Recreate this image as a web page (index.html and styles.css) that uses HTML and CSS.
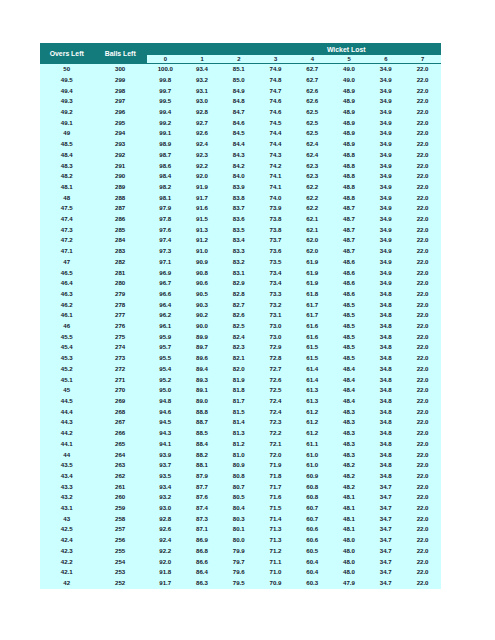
FILE: index.html
```html
<!DOCTYPE html>
<html>
<head>
<meta charset="utf-8">
<link rel="stylesheet" href="styles.css">
</head>
<body>
<div class="page">
<table class="sheet">
<thead>
<tr class="h1">
<th class="lead" rowspan="2">Overs Left</th>
<th class="lead" rowspan="2">Balls Left</th>
<th class="wk" colspan="8"><span>Wicket Lost</span></th>
</tr>
<tr class="h2">
<th>0</th><th>1</th><th>2</th><th>3</th><th>4</th><th>5</th><th>6</th><th>7</th>
</tr>
</thead>
<tbody>
<tr><td>50</td><td>300</td><td>100.0</td><td>93.4</td><td>85.1</td><td>74.9</td><td>62.7</td><td>49.0</td><td>34.9</td><td>22.0</td></tr>
<tr><td>49.5</td><td>299</td><td>99.8</td><td>93.2</td><td>85.0</td><td>74.8</td><td>62.7</td><td>49.0</td><td>34.9</td><td>22.0</td></tr>
<tr><td>49.4</td><td>298</td><td>99.7</td><td>93.1</td><td>84.9</td><td>74.7</td><td>62.6</td><td>48.9</td><td>34.9</td><td>22.0</td></tr>
<tr><td>49.3</td><td>297</td><td>99.5</td><td>93.0</td><td>84.8</td><td>74.6</td><td>62.6</td><td>48.9</td><td>34.9</td><td>22.0</td></tr>
<tr><td>49.2</td><td>296</td><td>99.4</td><td>92.8</td><td>84.7</td><td>74.6</td><td>62.5</td><td>48.9</td><td>34.9</td><td>22.0</td></tr>
<tr><td>49.1</td><td>295</td><td>99.2</td><td>92.7</td><td>84.6</td><td>74.5</td><td>62.5</td><td>48.9</td><td>34.9</td><td>22.0</td></tr>
<tr><td>49</td><td>294</td><td>99.1</td><td>92.6</td><td>84.5</td><td>74.4</td><td>62.5</td><td>48.9</td><td>34.9</td><td>22.0</td></tr>
<tr><td>48.5</td><td>293</td><td>98.9</td><td>92.4</td><td>84.4</td><td>74.4</td><td>62.4</td><td>48.9</td><td>34.9</td><td>22.0</td></tr>
<tr><td>48.4</td><td>292</td><td>98.7</td><td>92.3</td><td>84.3</td><td>74.3</td><td>62.4</td><td>48.8</td><td>34.9</td><td>22.0</td></tr>
<tr><td>48.3</td><td>291</td><td>98.6</td><td>92.2</td><td>84.2</td><td>74.2</td><td>62.3</td><td>48.8</td><td>34.9</td><td>22.0</td></tr>
<tr><td>48.2</td><td>290</td><td>98.4</td><td>92.0</td><td>84.0</td><td>74.1</td><td>62.3</td><td>48.8</td><td>34.9</td><td>22.0</td></tr>
<tr><td>48.1</td><td>289</td><td>98.2</td><td>91.9</td><td>83.9</td><td>74.1</td><td>62.2</td><td>48.8</td><td>34.9</td><td>22.0</td></tr>
<tr><td>48</td><td>288</td><td>98.1</td><td>91.7</td><td>83.8</td><td>74.0</td><td>62.2</td><td>48.8</td><td>34.9</td><td>22.0</td></tr>
<tr><td>47.5</td><td>287</td><td>97.9</td><td>91.6</td><td>83.7</td><td>73.9</td><td>62.2</td><td>48.7</td><td>34.9</td><td>22.0</td></tr>
<tr><td>47.4</td><td>286</td><td>97.8</td><td>91.5</td><td>83.6</td><td>73.8</td><td>62.1</td><td>48.7</td><td>34.9</td><td>22.0</td></tr>
<tr><td>47.3</td><td>285</td><td>97.6</td><td>91.3</td><td>83.5</td><td>73.8</td><td>62.1</td><td>48.7</td><td>34.9</td><td>22.0</td></tr>
<tr><td>47.2</td><td>284</td><td>97.4</td><td>91.2</td><td>83.4</td><td>73.7</td><td>62.0</td><td>48.7</td><td>34.9</td><td>22.0</td></tr>
<tr><td>47.1</td><td>283</td><td>97.3</td><td>91.0</td><td>83.3</td><td>73.6</td><td>62.0</td><td>48.7</td><td>34.9</td><td>22.0</td></tr>
<tr><td>47</td><td>282</td><td>97.1</td><td>90.9</td><td>83.2</td><td>73.5</td><td>61.9</td><td>48.6</td><td>34.9</td><td>22.0</td></tr>
<tr><td>46.5</td><td>281</td><td>96.9</td><td>90.8</td><td>83.1</td><td>73.4</td><td>61.9</td><td>48.6</td><td>34.9</td><td>22.0</td></tr>
<tr><td>46.4</td><td>280</td><td>96.7</td><td>90.6</td><td>82.9</td><td>73.4</td><td>61.9</td><td>48.6</td><td>34.9</td><td>22.0</td></tr>
<tr><td>46.3</td><td>279</td><td>96.6</td><td>90.5</td><td>82.8</td><td>73.3</td><td>61.8</td><td>48.6</td><td>34.8</td><td>22.0</td></tr>
<tr><td>46.2</td><td>278</td><td>96.4</td><td>90.3</td><td>82.7</td><td>73.2</td><td>61.7</td><td>48.5</td><td>34.8</td><td>22.0</td></tr>
<tr><td>46.1</td><td>277</td><td>96.2</td><td>90.2</td><td>82.6</td><td>73.1</td><td>61.7</td><td>48.5</td><td>34.8</td><td>22.0</td></tr>
<tr><td>46</td><td>276</td><td>96.1</td><td>90.0</td><td>82.5</td><td>73.0</td><td>61.6</td><td>48.5</td><td>34.8</td><td>22.0</td></tr>
<tr><td>45.5</td><td>275</td><td>95.9</td><td>89.9</td><td>82.4</td><td>73.0</td><td>61.6</td><td>48.5</td><td>34.8</td><td>22.0</td></tr>
<tr><td>45.4</td><td>274</td><td>95.7</td><td>89.7</td><td>82.3</td><td>72.9</td><td>61.5</td><td>48.5</td><td>34.8</td><td>22.0</td></tr>
<tr><td>45.3</td><td>273</td><td>95.5</td><td>89.6</td><td>82.1</td><td>72.8</td><td>61.5</td><td>48.5</td><td>34.8</td><td>22.0</td></tr>
<tr><td>45.2</td><td>272</td><td>95.4</td><td>89.4</td><td>82.0</td><td>72.7</td><td>61.4</td><td>48.4</td><td>34.8</td><td>22.0</td></tr>
<tr><td>45.1</td><td>271</td><td>95.2</td><td>89.3</td><td>81.9</td><td>72.6</td><td>61.4</td><td>48.4</td><td>34.8</td><td>22.0</td></tr>
<tr><td>45</td><td>270</td><td>95.0</td><td>89.1</td><td>81.8</td><td>72.5</td><td>61.3</td><td>48.4</td><td>34.8</td><td>22.0</td></tr>
<tr><td>44.5</td><td>269</td><td>94.8</td><td>89.0</td><td>81.7</td><td>72.4</td><td>61.3</td><td>48.4</td><td>34.8</td><td>22.0</td></tr>
<tr><td>44.4</td><td>268</td><td>94.6</td><td>88.8</td><td>81.5</td><td>72.4</td><td>61.2</td><td>48.3</td><td>34.8</td><td>22.0</td></tr>
<tr><td>44.3</td><td>267</td><td>94.5</td><td>88.7</td><td>81.4</td><td>72.3</td><td>61.2</td><td>48.3</td><td>34.8</td><td>22.0</td></tr>
<tr><td>44.2</td><td>266</td><td>94.3</td><td>88.5</td><td>81.3</td><td>72.2</td><td>61.2</td><td>48.3</td><td>34.8</td><td>22.0</td></tr>
<tr><td>44.1</td><td>265</td><td>94.1</td><td>88.4</td><td>81.2</td><td>72.1</td><td>61.1</td><td>48.3</td><td>34.8</td><td>22.0</td></tr>
<tr><td>44</td><td>264</td><td>93.9</td><td>88.2</td><td>81.0</td><td>72.0</td><td>61.0</td><td>48.3</td><td>34.8</td><td>22.0</td></tr>
<tr><td>43.5</td><td>263</td><td>93.7</td><td>88.1</td><td>80.9</td><td>71.9</td><td>61.0</td><td>48.2</td><td>34.8</td><td>22.0</td></tr>
<tr><td>43.4</td><td>262</td><td>93.5</td><td>87.9</td><td>80.8</td><td>71.8</td><td>60.9</td><td>48.2</td><td>34.8</td><td>22.0</td></tr>
<tr><td>43.3</td><td>261</td><td>93.4</td><td>87.7</td><td>80.7</td><td>71.7</td><td>60.8</td><td>48.2</td><td>34.7</td><td>22.0</td></tr>
<tr><td>43.2</td><td>260</td><td>93.2</td><td>87.6</td><td>80.5</td><td>71.6</td><td>60.8</td><td>48.1</td><td>34.7</td><td>22.0</td></tr>
<tr><td>43.1</td><td>259</td><td>93.0</td><td>87.4</td><td>80.4</td><td>71.5</td><td>60.7</td><td>48.1</td><td>34.7</td><td>22.0</td></tr>
<tr><td>43</td><td>258</td><td>92.8</td><td>87.3</td><td>80.3</td><td>71.4</td><td>60.7</td><td>48.1</td><td>34.7</td><td>22.0</td></tr>
<tr><td>42.5</td><td>257</td><td>92.6</td><td>87.1</td><td>80.1</td><td>71.3</td><td>60.6</td><td>48.1</td><td>34.7</td><td>22.0</td></tr>
<tr><td>42.4</td><td>256</td><td>92.4</td><td>86.9</td><td>80.0</td><td>71.3</td><td>60.6</td><td>48.0</td><td>34.7</td><td>22.0</td></tr>
<tr><td>42.3</td><td>255</td><td>92.2</td><td>86.8</td><td>79.9</td><td>71.2</td><td>60.5</td><td>48.0</td><td>34.7</td><td>22.0</td></tr>
<tr><td>42.2</td><td>254</td><td>92.0</td><td>86.6</td><td>79.7</td><td>71.1</td><td>60.4</td><td>48.0</td><td>34.7</td><td>22.0</td></tr>
<tr><td>42.1</td><td>253</td><td>91.8</td><td>86.4</td><td>79.6</td><td>71.0</td><td>60.4</td><td>48.0</td><td>34.7</td><td>22.0</td></tr>
<tr><td>42</td><td>252</td><td>91.7</td><td>86.3</td><td>79.5</td><td>70.9</td><td>60.3</td><td>47.9</td><td>34.7</td><td>22.0</td></tr>
</tbody>
</table>
</div>
</body>
</html>
```
FILE: styles.css
```css
html, body {
  margin: 0;
  padding: 0;
  background: #ffffff;
}
.page {
  padding: 43px 0 0 40px;
}
.sheet {
  border-collapse: collapse;
  table-layout: fixed;
  width: 401px;
  font-family: "Liberation Sans", Arial, sans-serif;
  font-weight: bold;
  background: #ccffff;
  color: #14202e;
}
.sheet th, .sheet td {
  padding: 0;
  text-align: center;
  width: 40px;
  overflow: hidden;
  white-space: nowrap;
}
.sheet th.lead {
  background: #137b7b;
  color: #ffffff;
  font-size: 6.9px;
  width: 40px;
  vertical-align: middle;
  padding-top: 1px;
}
.h1 {
  height: 12px;
}
.h1 .wk {
  background: #137b7b;
  color: #ffffff;
  font-size: 6.9px;
  text-align: left;
  padding-left: 180px;
}
.h2 {
  height: 8.7px;
}
.h2 th {
  font-size: 5.9px;
  border-bottom: 1px solid #137b7b;
  line-height: 7px;
}
.sheet td {
  font-size: 6.1px;
  height: 10.71px;
  line-height: 10.71px;
}
```
